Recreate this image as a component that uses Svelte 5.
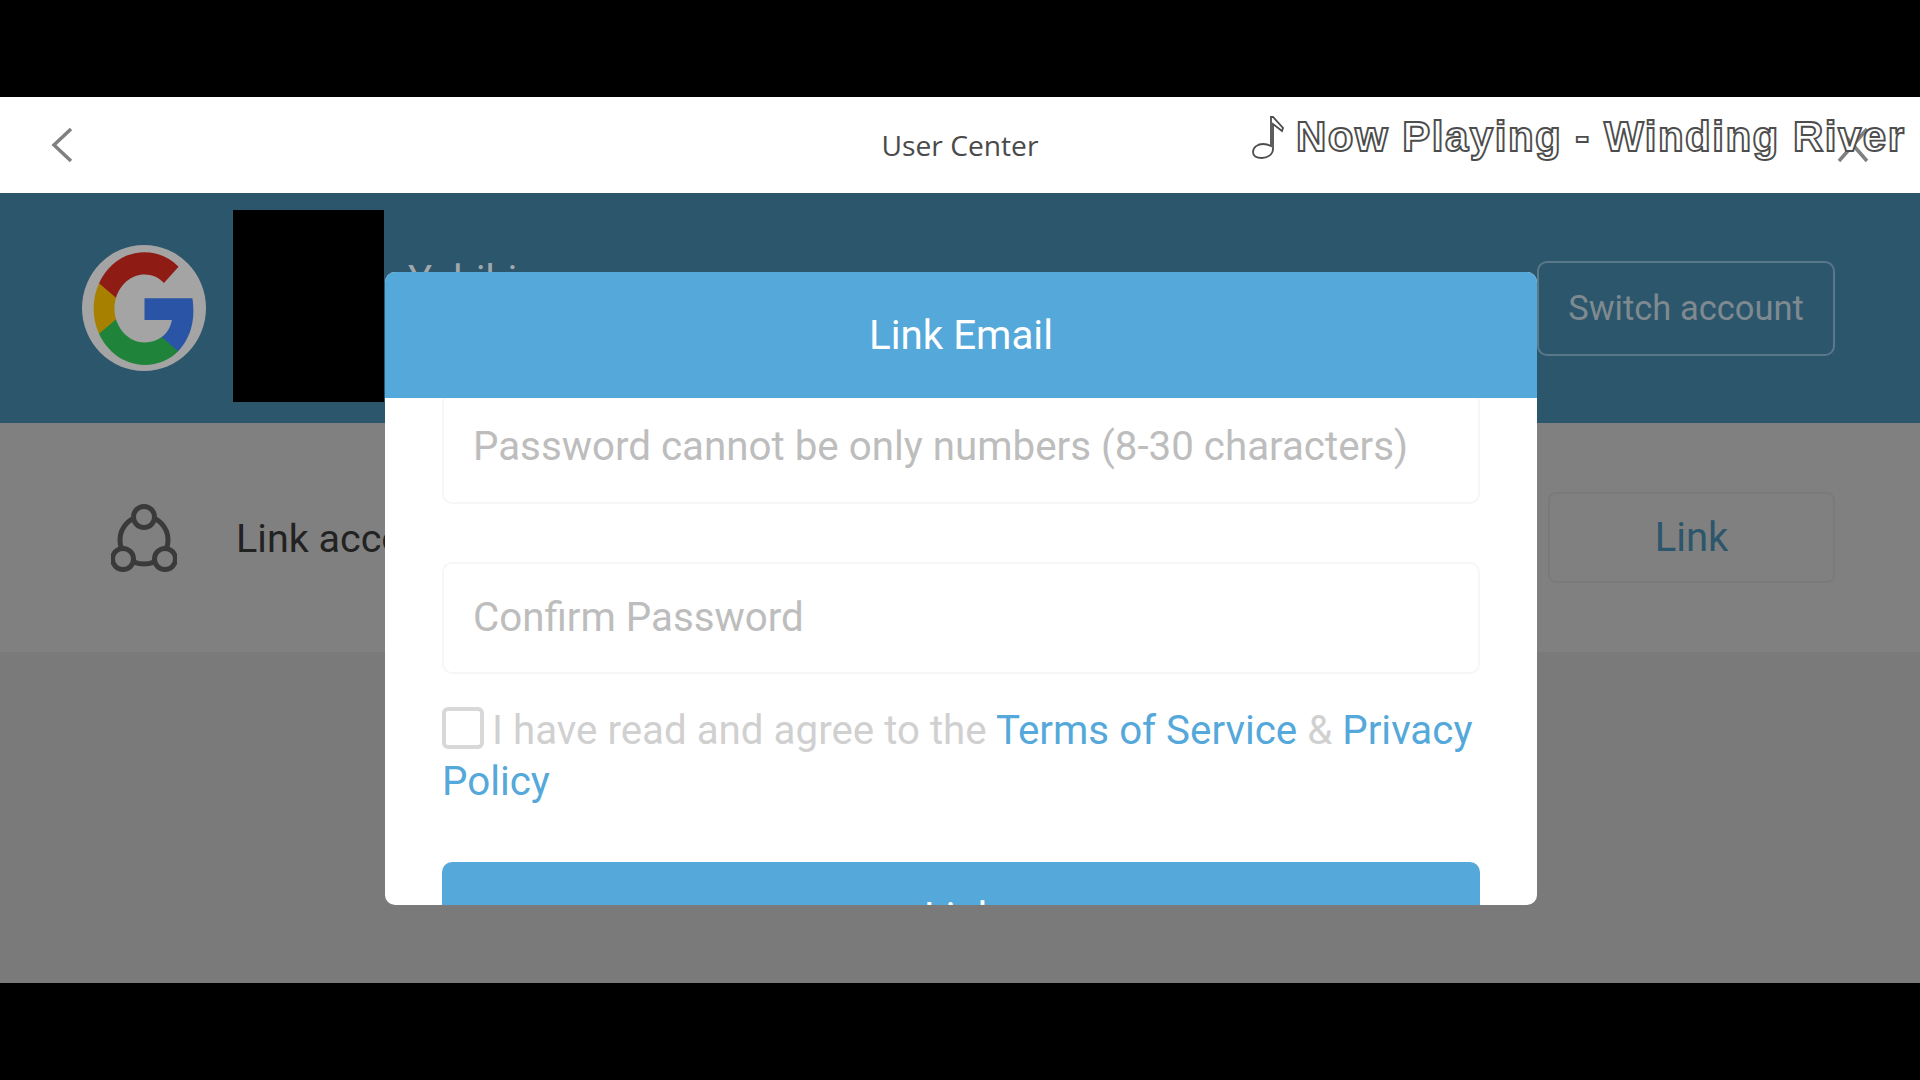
<script>
	const NOW_PLAYING = 'Now Playing - Winding River';
</script>

<div class="screen">
	<div class="bar"></div>

	<main class="app">
		<header class="topbar">
			<svg class="back" viewBox="0 0 22 36" width="22" height="36">
				<path d="M20 2 L3 18 L20 34" />
			</svg>
			<h1>User Center</h1>
			<svg class="close" viewBox="0 0 32 36" width="32" height="36">
				<path d="M2 2 L30 34 M30 2 L2 34" />
			</svg>
		</header>

		<section class="hero">
			<div class="logo">
				<svg viewBox="0 0 48 48" width="111" height="123" preserveAspectRatio="none">
					<path fill="#2a54a6" d="M45.12 24.5c0-1.56-.14-3.06-.4-4.5H24v8.51h11.84c-.51 2.75-2.06 5.08-4.39 6.64v5.52h7.11c4.16-3.83 6.56-9.47 6.56-15.17z" />
					<path fill="#1f8439" d="M24 46c5.94 0 10.92-1.97 14.56-5.33l-7.11-5.52c-1.97 1.32-4.49 2.1-7.45 2.1-5.73 0-10.58-3.87-12.31-9.07H4.34v5.7C7.96 41.07 15.4 46 24 46z" />
					<path fill="#a88000" d="M11.69 28.18C11.25 26.86 11 25.45 11 24s.25-2.86.69-4.18v-5.7H4.34C2.85 17.09 2 20.45 2 24c0 3.55.85 6.91 2.34 9.88l7.35-5.7z" />
					<path fill="#8e1c14" d="M24 10.75c3.23 0 6.13 1.11 8.41 3.29l6.31-6.31C34.91 4.18 29.93 2 24 2 15.4 2 7.96 6.93 4.34 14.12l7.35 5.7c1.73-5.2 6.58-9.07 12.31-9.07z" />
				</svg>
			</div>
			<span class="name">Yubihi</span>
			<button class="switch">Switch account</button>
		</section>

		<section class="link-row">
			<svg class="link-icon" viewBox="0 0 66 68" width="66" height="68">
				<circle cx="33" cy="36" r="24" />
				<circle class="node" cx="33" cy="13" r="10.5" />
				<circle class="node" cx="12" cy="55" r="10.5" />
				<circle class="node" cx="54" cy="55" r="10.5" />
			</svg>
			<span class="link-label">Link account</span>
			<button class="link-btn">Link</button>
		</section>
	</main>

	<div class="bar"></div>

	<div class="redact"></div>

	<div class="modal">
		<div class="modal-title">Link Email</div>
		<div class="modal-body">
			<div class="field first">Password cannot be only numbers (8-30 characters)</div>
			<div class="field">Confirm Password</div>
			<p class="agree">
				<span class="check"></span>I have read and agree to the <a href="#terms">Terms of Service</a> &amp; <a href="#privacy">Privacy Policy</a>
			</p>
			<button class="submit">Link</button>
		</div>
	</div>

	<div class="playing">
		<svg viewBox="0 0 34 46" width="34" height="46">
			<path d="M19 3 h2 l10 11 l-1 3 l-9 -7 v25 c0 5-5 9-11 9 c-6 0-9-2-9-6 c0-5 5-8 10-8 c3 0 6 1 8 2 z" />
		</svg>
		<span>{NOW_PLAYING}</span>
	</div>
</div>

<style>
	:global(body) {
		margin: 0;
		background: #000;
	}

	.screen {
		position: relative;
		width: 1920px;
		height: 1080px;
		display: flex;
		flex-direction: column;
		overflow: hidden;
		font-family: Roboto, sans-serif;
	}

	.bar {
		height: 97px;
		background: #000;
		flex: none;
	}

	.app {
		flex: 1;
		display: flex;
		flex-direction: column;
		background: #7a7a7a;
	}

	.topbar {
		height: 96px;
		flex: none;
		display: flex;
		align-items: center;
		justify-content: space-between;
		padding: 0 51px;
		background: #fff;
		position: relative;
	}

	.topbar h1 {
		position: absolute;
		left: 0;
		right: 0;
		margin: 0;
		text-align: center;
		font: 400 28.2px "Open Sans", sans-serif;
		color: #4a4a4a;
	}

	.back path,
	.close path {
		fill: none;
		stroke: #808080;
		stroke-width: 3.5;
	}

	.hero {
		height: 230px;
		flex: none;
		display: flex;
		align-items: center;
		padding: 0 85px 0 82px;
		background: #2c566c;
	}

	.logo {
		width: 124px;
		height: 126px;
		flex: none;
		border-radius: 50%;
		background: #a4a4a4;
		display: flex;
		align-items: center;
		justify-content: center;
	}

	.name {
		margin: 0 0 56px 202px;
		font-size: 40px;
		color: #a0a8ac;
	}

	.switch {
		margin-left: auto;
		width: 298px;
		height: 95px;
		background: none;
		border: 2px solid #59788a;
		border-radius: 10px;
		font: 400 34.5px Roboto, sans-serif;
		color: #7f8a90;
	}

	.link-row {
		height: 229px;
		flex: none;
		display: flex;
		align-items: center;
		padding: 0 85px 0 111px;
		background: #808080;
	}

	.link-icon circle {
		fill: none;
		stroke: #3a3a3a;
		stroke-width: 5;
	}

	.link-icon .node {
		fill: #808080;
	}

	.link-label {
		margin-left: 59px;
		padding-top: 2px;
		font-size: 39.5px;
		color: #222;
	}

	.link-btn {
		margin-left: auto;
		width: 287px;
		height: 91px;
		background: none;
		border: 2px solid #7a7a7a;
		border-radius: 8px;
		font: 400 40px Roboto, sans-serif;
		color: #2c566c;
	}

	.redact {
		position: absolute;
		left: 233px;
		top: 210px;
		width: 151px;
		height: 192px;
		background: #000;
	}

	.modal {
		position: absolute;
		left: 385px;
		top: 272px;
		width: 1152px;
		height: 633px;
		display: flex;
		flex-direction: column;
		overflow: hidden;
		border-radius: 10px;
		background: #fff;
	}

	.modal-title {
		height: 126px;
		flex: none;
		display: flex;
		align-items: center;
		justify-content: center;
		background: #55a8da;
		color: #fff;
		font-size: 40.3px;
	}

	.modal-body {
		padding: 0 57px;
		overflow: hidden;
		flex: 1;
	}

	.field {
		height: 112px;
		display: flex;
		align-items: center;
		box-sizing: border-box;
		padding: 0 0 2px 29px;
		margin-bottom: 58px;
		border: 2px solid #f6f6f6;
		border-radius: 10px;
		color: #bdbdbd;
		font-size: 40.3px;
	}

	.field.first {
		margin-top: -6px;
		padding-bottom: 4px;
	}

	.field + .field {
		margin-bottom: 31px;
	}

	.agree {
		margin: 0;
		font-size: 40.3px;
		line-height: 51px;
		color: #d0d0d0;
	}

	.agree a {
		color: #55a8da;
		text-decoration: none;
	}

	.check {
		display: inline-block;
		box-sizing: border-box;
		width: 42px;
		height: 42px;
		margin-right: 8px;
		vertical-align: -5px;
		border: 4px solid #d8d8d8;
		border-radius: 6px;
	}

	.submit {
		display: block;
		width: 100%;
		height: 110px;
		margin-top: 55px;
		border: 0;
		border-radius: 10px;
		background: #55a8da;
		color: #fff;
		font: 400 40.3px Roboto, sans-serif;
	}

	.playing {
		position: absolute;
		left: 1252px;
		top: 113px;
		display: flex;
		align-items: center;
		gap: 10px;
		font: 700 42px "Liberation Sans", sans-serif;
		color: #fff;
		-webkit-text-stroke: 1.9px #4d4d4d;
		letter-spacing: 1.5px;
		white-space: nowrap;
	}

	.playing path {
		fill: #fff;
		stroke: #4d4d4d;
		stroke-width: 1.8;
	}
</style>
